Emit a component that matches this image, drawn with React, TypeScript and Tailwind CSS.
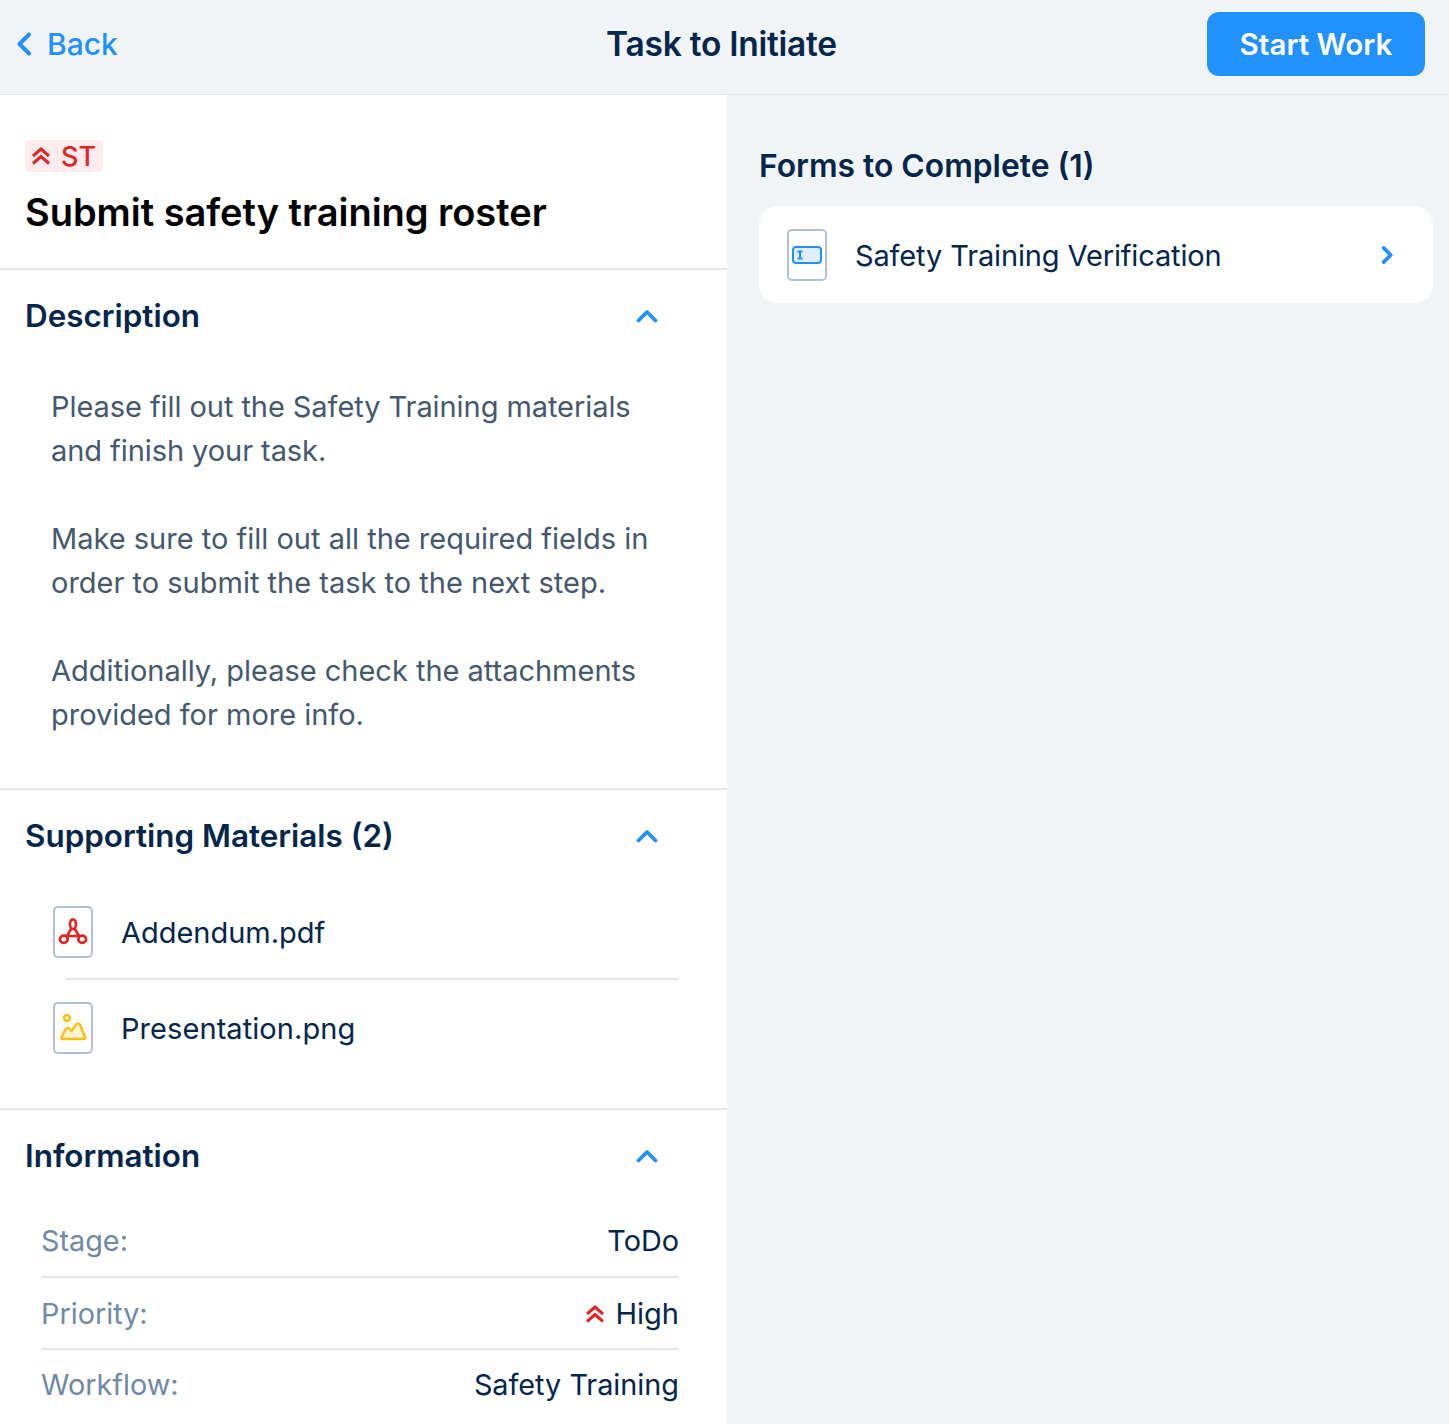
import React from "react";

const Up = () => (
  <div className="w-[24px] h-[24px] flex items-center justify-center -mt-[1px]">
    <svg viewBox="0 0 22 14" fill="none" stroke="#2291ff" strokeWidth="3.8" strokeLinecap="round" strokeLinejoin="round" className="w-[22px] h-[14px]">
      <path d="M2.5 11.5 L11 3 L19.5 11.5" />
    </svg>
  </div>
);

const Priority = ({ className }: { className: string }) => (
  <svg viewBox="0 0 18 18" fill="none" stroke="#de2626" strokeWidth="3" className={className}>
    <path d="M1 9 L9 2 L17 9" />
    <path d="M1 16.5 L9 9.5 L17 16.5" />
  </svg>
);

const FileFrame = ({ children }: { children: React.ReactNode }) => (
  <div className="w-[40px] h-[52px] shrink-0 rounded-[5px] border-2 border-[#b1c2d6] bg-white flex items-center justify-center">
    {children}
  </div>
);

const Section = ({ title, children, last }: { title: string; children: React.ReactNode; last?: boolean }) => (
  <section className={last ? "" : "border-b-2 border-[#e2e6ec]"}>
    <div className="h-[92px] pl-[25px] pr-[68px] flex items-center justify-between">
      <h2 className="text-[31.4px] leading-[40px] font-semibold text-[#04264a]">{title}</h2>
      <Up />
    </div>
    {children}
  </section>
);

const InfoRow = ({ label, children, border, h }: { label: string; children: React.ReactNode; border?: boolean; h: string }) => (
  <div className={`flex items-center justify-between ${h} ${border ? "border-b-2 border-[#e2e6ec]" : ""}`}>
    <span className="text-[#7189a5]">{label}</span>
    <span className="flex items-center gap-[11px] text-[#04264a]">{children}</span>
  </div>
);

export default function App() {
  return (
    <div className="w-[1449px] h-[1424px] overflow-hidden bg-[#f1f4f7] flex flex-col" style={{ fontFamily: "Inter, sans-serif" }}>
      <header className="h-[95px] shrink-0 border-b border-[#e0e5eb] flex items-center justify-between pl-[17px] pr-[24px] pb-[6px] relative">
        <div className="flex items-center gap-[16px] text-[#2291ff] text-[30px] font-medium">
          <svg viewBox="0 0 14 24" fill="none" stroke="#2291ff" strokeWidth="4" strokeLinecap="round" strokeLinejoin="round" className="w-[14px] h-[24px]">
            <path d="M12 2.5 L2.5 12 L12 21.5" />
          </svg>
          <span>Back</span>
        </div>
        <h1 className="absolute left-0 w-[1443px] text-center text-[33.5px] font-semibold text-[#04264a] tracking-[-0.25px]">Task to Initiate</h1>
        <button className="w-[218px] h-[64px] rounded-[12px] bg-[#2291ff] text-white text-[29.6px] font-semibold">Start Work</button>
      </header>

      <div className="flex flex-1 min-h-0">
        <main className="w-[727px] shrink-0 bg-white">
          <div className="h-[175px] pt-[45px] pl-[25px] border-b-2 border-[#e2e6ec]">
            <div className="w-[78px] h-[32px] rounded-[4px] bg-[#fcecee] flex items-center gap-[11px] pl-[7px]">
              <Priority className="w-[18px] h-[18px]" />
              <span className="text-[27px] font-medium text-[#de2626] leading-none">ST</span>
            </div>
            <h1 className="mt-[16px] text-[38px] leading-[48px] font-semibold text-black tracking-[-0.03px]">Submit safety training roster</h1>
          </div>

          <Section title="Description">
            <div className="h-[426px] pt-[23px] pl-[51px] pr-[70px] text-[29px] leading-[44px] text-[#46586e] space-y-[44px]">
              <p className="tracking-[-0.07px]">Please fill out the Safety Training materials and finish your task.</p>
              <p>Make sure to fill out all the required fields in order to submit the task to the next step.</p>
              <p className="tracking-[-0.02px]">Additionally, please check the attachments provided for more info.</p>
            </div>
          </Section>

          <Section title="Supporting Materials (2)">
            <div className="h-[226px] pt-[24px] pl-[53px] pr-[48px] text-[29px] text-[#04264a]">
              <div className="flex items-center gap-[28px] h-[52px]">
                <FileFrame>
                  <svg viewBox="0 0 30 30" fill="none" stroke="#de2626" strokeWidth="2.7" className="w-[30px] h-[30px]">
                    <ellipse cx="15" cy="7.2" rx="3" ry="4.9" />
                    <path d="M13.4 11.5 L8.6 19.6 M16.6 11.5 L21.4 19.6 M9.5 19 H20.5" />
                    <ellipse cx="5.8" cy="22.3" rx="3.9" ry="3.6" />
                    <ellipse cx="24.2" cy="22.3" rx="3.9" ry="3.6" />
                  </svg>
                </FileFrame>
                <span className="pt-[1px] tracking-[-0.03px]">Addendum.pdf</span>
              </div>
              <div className="ml-[12px] mt-[20px] mb-[22px] border-t-2 border-[#e2e6ec]" />
              <div className="flex items-center gap-[28px] h-[52px]">
                <FileFrame>
                  <svg viewBox="0 0 30 30" fill="none" stroke="#ffbf0f" strokeWidth="2.4" strokeLinejoin="round" className="w-[30px] h-[30px]">
                    <circle cx="9" cy="5" r="3" />
                    <path d="M3.5 26 C3 25.5 3.2 24.8 3.6 24 L7.5 16.5 C8.5 14.5 10.5 14.5 11.5 16 L13.5 18 L18 11.5 C19 10 21 10 22 11.5 L27 24 C27.5 25.2 27 26 26 26 Z" fill="#fff3d1" />
                  </svg>
                </FileFrame>
                <span className="pt-[1px] tracking-[0.07px]">Presentation.png</span>
              </div>
            </div>
          </Section>

          <Section title="Information" last>
            <div className="pl-[41px] pr-[48px] text-[28.8px] leading-[40px]">
              <InfoRow label="Stage:" border h="h-[76px] pt-[3px]">ToDo</InfoRow>
              <InfoRow label="Priority:" border h="h-[72px] pt-[1px]">
                <Priority className="w-[18px] h-[18px]" />
                <span className="text-[29px]">High</span>
              </InfoRow>
              <InfoRow label="Workflow:" h="h-[70px]">Safety Training</InfoRow>
            </div>
          </Section>
        </main>

        <aside className="flex-1 pl-[32px] pr-[16px]">
          <h2 className="mt-[51px] text-[31.8px] leading-[40px] font-semibold text-[#04264a]">Forms to Complete (1)</h2>
          <div className="mt-[20px] h-[97px] rounded-[20px] bg-white flex items-center pl-[28px] pr-[36px] text-[29px] tracking-[-0.14px] text-[#04264a]">
            <FileFrame>
              <svg viewBox="0 0 30 18" className="w-[30px] h-[18px]" fill="none">
                <rect x="1" y="1" width="28" height="16" rx="3" fill="#e0eeff" stroke="#2291ff" strokeWidth="2" />
                <path d="M5.5 5.5 H10.5 M8 5.5 V12.5 M5.5 12.5 H10.5" stroke="#2291ff" strokeWidth="2" />
              </svg>
            </FileFrame>
            <span className="ml-[28px] flex-1 pt-[2px]">Safety Training Verification</span>
            <svg viewBox="0 0 24 24" fill="none" stroke="#2291ff" strokeWidth="4.4" strokeLinecap="round" strokeLinejoin="round" className="w-[20px] h-[24px]">
              <path d="M8 3.5 L16.5 12 L8 20.5" />
            </svg>
          </div>
        </aside>
      </div>
    </div>
  );
}
